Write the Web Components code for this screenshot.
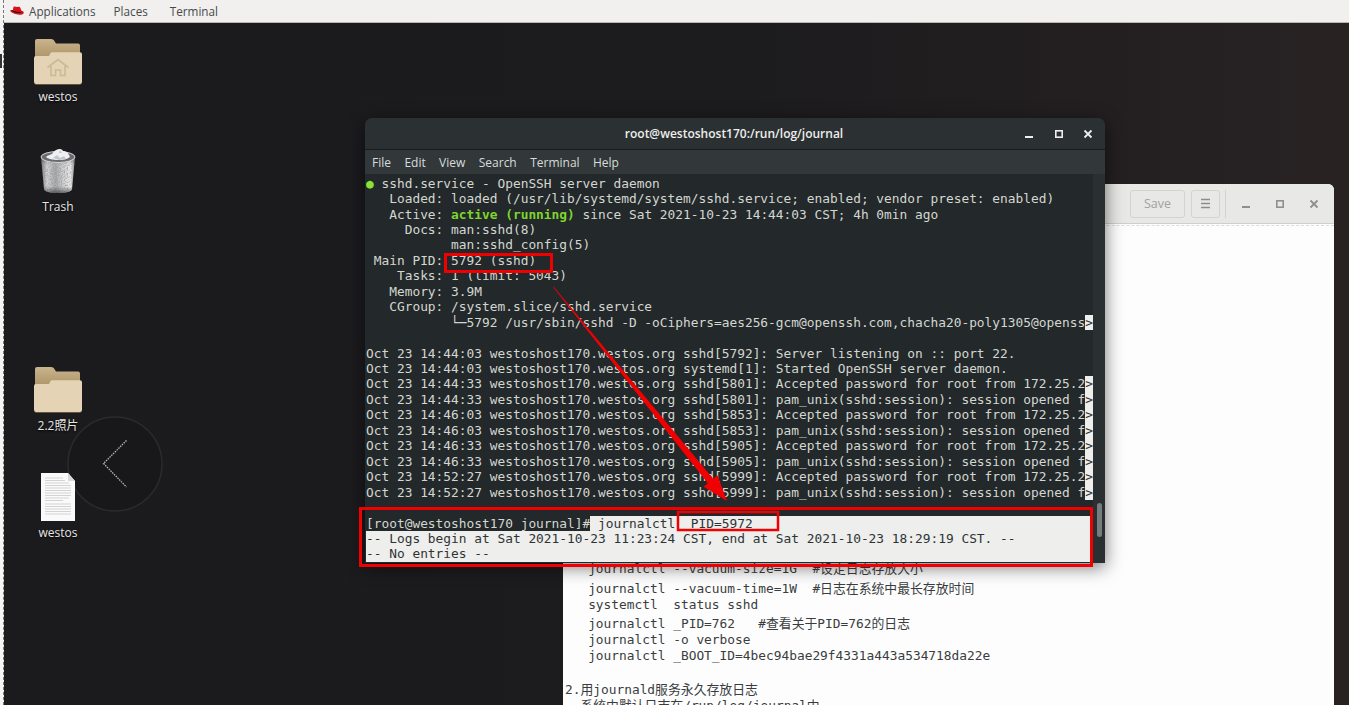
<!DOCTYPE html>
<html>
<head>
<meta charset="utf-8">
<title>desktop</title>
<style>
    html, body { margin: 0; height: 100%; overflow: hidden; background: #1b1b1d; }
</style>
</head>
<body>

<template id="desk-screen-template">
    <style>
        :host {
            display: flex;
            flex-direction: column;
            position: relative;
            width: 1349px;
            height: 705px;
            overflow: hidden;
            background: linear-gradient(90deg, #1b1b1e 0%, #1c1b1d 55%, #282223 100%);
            font-family: "Open Sans", "Noto Sans CJK SC", sans-serif;
        }
        .strip {
            position: absolute;
            left: 0;
            top: 0;
            bottom: 0;
            width: 3px;
            background: #f4f4f2;
            border-right: 1px dashed #77777a;
            z-index: 5;
        }
        .notch {
            position: absolute;
            left: 0;
            top: 54px;
            width: 2px;
            height: 14px;
            background: #333;
        }
    </style>
    <div class="strip"><div class="notch"></div></div>
    <slot></slot>
</template>

<template id="top-panel-template">
    <style>
        :host {
            display: flex;
            align-items: center;
            flex: none;
            height: 22px;
            padding-left: 10px;
            background: #f1f0ee;
            border-bottom: 1px solid #b9b8b5;
            color: #46494b;
            font-size: 11.700px;
            position: relative;
            z-index: 2;
        }
        svg { width: 14px; height: 11px; margin-right: 5px; }
        span { margin-right: 18px; }
        span + span { margin-right: 22px; }
    </style>
    <svg viewBox="0 0 14 11">
        <path fill="#d8121a" d="M4 .6C5 .2 6 .9 7.2 1c1.1 0 1.9-.5 2.7.2.7.7 1 2.2 1.4 3.2.9.4 2.4.9 2.5 2 .1 1.5-2 2.4-4.600 2.300C5.800 8.600 1.600 7 .5 5.300c-.5-.8 0-1.500.9-1.300.6.200 1.100.4 1.500.500C3.100 3 3.200 1.100 4 .6z"/>
        <path fill="#1c1112" d="M1.800 4.100c2 1.100 5.500 2.300 9.300 1.800l.3.900c-3.800.7-7.300-.5-9.900-2.100z"/>
    </svg>
    <span>Applications</span>
    <span>Places</span>
    <span>Terminal</span>
</template>

<template id="desktop-icon-template">
    <style>
        :host {
            display: flex;
            flex-direction: column;
            align-items: center;
            position: absolute;
            left: var(--x);
            top: var(--y);
            width: 90px;
            color: #e6e6e6;
            font-size: 12px;
            line-height: 16px;
            text-shadow: 0 1px 2px #000;
        }
        .pic { height: var(--pic-h, 47px); display: flex; justify-content: center; }
        .name { margin-top: var(--name-gap, 4px); }
    </style>
    <div class="pic"><slot name="pic"></slot></div>
    <div class="name"><slot></slot></div>
</template>

<template id="back-button-template">
    <style>
        :host { display: block; position: absolute; left: 66px; top: 415px; width: 98px; height: 98px; }
        svg { display: block; }
    </style>
    <svg width="98" height="98" viewBox="0 0 98 98">
        <circle cx="49" cy="49" r="47" fill="#18181a" stroke="#2b2b2d" stroke-width="1.500"/>
        <path d="M60.500 25.500L37.500 48.500 60.500 72" fill="none" stroke="#b8b8b8" stroke-width="1.300" stroke-dasharray="1.500 1"/>
    </svg>
</template>

<template id="terminal-window-template">
    <style>
        :host {
            display: flex;
            flex-direction: column;
            position: absolute;
            left: 365px;
            top: 118px;
            width: 740px;
            height: 445px;
            border-radius: 7px 7px 0 0;
            background: #23282b;
            box-shadow: 0 4px 18px rgba(0, 0, 0, .55);
            overflow: hidden;
            z-index: 2;
        }
        .title {
            flex: none;
            display: flex;
            align-items: center;
            position: relative;
            height: 31px;
            background: #2b3032;
            border-bottom: 1px solid #191c1d;
            color: #eeeeec;
            font-size: 12px;
            font-weight: 600;
        }
        .title .text { flex: 1; text-align: center; padding-right: 2px; }
        .wm { position: absolute; top: 9px; width: 14px; height: 14px; }
        .wm.min { left: 657px; }
        .wm.max { left: 687px; }
        .wm.cls { left: 716px; }
        .menu {
            flex: none;
            display: flex;
            align-items: center;
            gap: 13.400px;
            height: 24px;
            padding-left: 7px;
            background: #32383a;
            color: #d8dbdb;
            font-size: 12px;
        }
        .main { flex: 1; display: flex; min-height: 0; }
        .rows { flex: 1; padding: 1.600px 0 0 1px; min-width: 0; }
        .scroll { flex: none; width: 12px; background: #2a2f31; }
        .thumb { width: 5px; height: 34px; margin: 329px 0 0 3.500px; border-radius: 3px; background: #777c7e; }
    </style>
    <div class="title">
        <div class="text"><slot name="title"></slot></div>
        <svg class="wm min" viewBox="0 0 14 14"><rect x="3" y="9" width="8" height="2" fill="#eeeeec"/></svg>
        <svg class="wm max" viewBox="0 0 14 14"><rect x="3.800" y="3.800" width="6.400" height="6.400" fill="none" stroke="#eeeeec" stroke-width="1.600"/></svg>
        <svg class="wm cls" viewBox="0 0 14 14"><path d="M3.500 3.500l7 7M10.500 3.500l-7 7" stroke="#eeeeec" stroke-width="1.800"/></svg>
    </div>
    <div class="menu">
        <span>File</span><span>Edit</span><span>View</span><span>Search</span><span>Terminal</span><span>Help</span>
    </div>
    <div class="main">
        <div class="rows"><slot></slot></div>
        <div class="scroll"><div class="thumb"></div></div>
    </div>
</template>

<template id="term-row-template">
    <style>
        :host {
            display: flex;
            height: 15.460px;
            line-height: 15.460px;
            width: 727px;
            white-space: pre;
            font-family: "DejaVu Sans Mono", monospace;
            font-size: 12.850px;
            color: #d3d7cf;
            overflow: hidden;
        }
        :host([selected]) { background: #eeeeec; color: #2e3436; }
        ::slotted(.sel) { flex: 1; background: #eeeeec; color: #2e3436; }
        ::slotted(.more) { background: #eeeeec; color: #2e3436; font-style: normal; }
        ::slotted(.ok) { color: #7fd42e; font-weight: bold; }
        ::slotted(.dot) { color: #8ae234; }
    </style>
    <slot></slot>
</template>

<template id="editor-window-template">
    <style>
        :host {
            display: flex;
            flex-direction: column;
            position: absolute;
            left: 563px;
            top: 184px;
            width: 771px;
            height: 521px;
            border-radius: 0 6px 0 0;
            background: #fdfdfd;
            overflow: hidden;
            z-index: 1;
        }
        .head {
            flex: none;
            display: flex;
            align-items: center;
            height: 40px;
            padding-left: 567px;
            background: #e8e8e6;
            border-bottom: 1px solid #cfcfcd;
            box-sizing: border-box;
        }
        .head > * { flex: none; }
        .btn {
            box-sizing: border-box;
            display: flex;
            align-items: center;
            justify-content: center;
            height: 28px;
            border: 1px solid #d3d3d1;
            border-radius: 3px;
            color: #a2a2a0;
            font-size: 12.500px;
        }
        .save { width: 55px; margin-right: 6px; }
        .burger { width: 29px; margin-right: 5px; }
        .sep { width: 1px; height: 28px; background: #d3d3d1; margin-right: 13px; }
        .wm { width: 14px; height: 14px; margin-right: 20px; }
        .dash { flex: none; height: 0; margin-top: 1px; border-top: 1px dashed #dcdcda; }
        .doc {
            flex: 1;
            margin-left: -29px;
            padding-top: 304.200px;
            font-family: "DejaVu Sans Mono", "Noto Sans CJK SC", monospace;
            font-size: 12.850px;
            color: #3a3d3f;
        }
    </style>
    <div class="head">
        <div class="btn save">Save</div>
        <div class="btn burger">
            <svg width="11" height="11" viewBox="0 0 11 11"><path d="M1 1.500h9M1 5.500h9M1 9.500h9" stroke="#8c8c8a" stroke-width="1.500"/></svg>
        </div>
        <div class="sep"></div>
        <svg class="wm" viewBox="0 0 14 14"><rect x="3" y="9" width="8" height="2" fill="#8f8f8d"/></svg>
        <svg class="wm" viewBox="0 0 14 14"><rect x="3.800" y="3.800" width="6.400" height="6.400" fill="none" stroke="#8f8f8d" stroke-width="1.600"/></svg>
        <svg class="wm" viewBox="0 0 14 14"><path d="M3.500 3.500l7 7M10.500 3.500l-7 7" stroke="#8f8f8d" stroke-width="1.800"/></svg>
    </div>
    <div class="dash"></div>
    <div class="doc"><slot></slot></div>
</template>

<template id="doc-line-template">
    <style>
        :host {
            display: block;
            height: 15.500px;
            line-height: 15.500px;
            margin-top: var(--gap, 0);
            white-space: pre;
        }
    </style>
    <slot></slot>
</template>

<template id="red-marks-template">
    <style>
        :host { display: block; position: absolute; left: 0; top: 0; width: 1349px; height: 705px; z-index: 3; pointer-events: none; }
        svg { display: block; }
    </style>
    <svg width="1349" height="705" viewBox="0 0 1349 705">
        <g fill="none" stroke="#f00000">
            <rect x="445.500" y="254.500" width="106" height="17" stroke-width="3"/>
            <rect x="360.500" y="508.500" width="731" height="57" stroke-width="3"/>
            <rect x="678" y="512" width="100" height="18" stroke-width="2.500"/>
        </g>
        <polygon fill="#f00000" points="553,287 553.500,286.600 713.200,478.800 717.500,475.300 727,501 703.500,486.700 707.800,483.200"/>
    </svg>
</template>

<script>
    class ShadowBox extends HTMLElement {
        connectedCallback() {
            if (this.shadowRoot) return;
            const template = document.getElementById(this.constructor.templateId).content;
            this.attachShadow({ mode: "open" }).appendChild(template.cloneNode(true));
        }
    }

    const define = (name) => {
        customElements.define(name, class extends ShadowBox {
            static templateId = name + '-template';
        });
    };

    ['desk-screen', 'top-panel', 'desktop-icon', 'back-button', 'terminal-window',
     'term-row', 'editor-window', 'doc-line', 'red-marks'].forEach(define);
</script>

<desk-screen>
    <top-panel></top-panel>

    <desktop-icon style="--x:13px;--y:38px;--name-gap:4px">
        <svg slot="pic" width="48" height="47" viewBox="0 0 48 47">
            <defs><linearGradient id="tabA" x1="0" y1="0" x2="0" y2="1"><stop offset="0" stop-color="#c9b48d"/><stop offset="1" stop-color="#ad9468"/></linearGradient></defs>
            <path fill="url(#tabA)" d="M1 3a2 2 0 0 1 2-2h14c2 0 3 1 4 3l1 1.500h22a2 2 0 0 1 2 2V20H1z"/>
            <path fill="#e4d3b4" d="M0 20a2 2 0 0 1 2-2h12c1.500 0 1.600-.8 2-2 .4-1.300 1-1.800 2.500-1.800H46a2 2 0 0 1 2 2V44a2 2 0 0 1-2 2H2a2 2 0 0 1-2-2z"/>
            <path fill="#a78f63" d="M0 44.500a2 2 0 0 0 2 2h44a2 2 0 0 0 2-2V45a1 1 0 0 1-1 1H1a1 1 0 0 1-1-1z"/>
            <path fill="none" stroke="#ccb996" stroke-width="1.600" d="M13.500 29.500L24 21.500l10.500 8M17 28v9.500h4.500V32h5v5.500H31V28"/>
        </svg>
        westos
    </desktop-icon>

    <desktop-icon style="--x:13px;--y:148px;--pic-h:46px;--name-gap:5px">
        <svg slot="pic" width="36" height="46" viewBox="0 0 36 46">
            <defs>
                <linearGradient id="can" x1="0" y1="0" x2="1" y2="0">
                    <stop offset="0" stop-color="#77787a"/><stop offset=".18" stop-color="#d6d7d8"/><stop offset=".42" stop-color="#a9abac"/>
                    <stop offset=".65" stop-color="#cfd0d1"/><stop offset=".88" stop-color="#ededed"/><stop offset="1" stop-color="#808183"/>
                </linearGradient>
                <linearGradient id="canShade" x1="0" y1="0" x2="0" y2="1">
                    <stop offset="0" stop-color="#000" stop-opacity=".28"/><stop offset=".2" stop-color="#000" stop-opacity="0"/>
                    <stop offset=".82" stop-color="#000" stop-opacity="0"/><stop offset="1" stop-color="#000" stop-opacity=".45"/>
                </linearGradient>
                <filter id="grain" x="0" y="0" width="100%" height="100%">
                    <feTurbulence type="fractalNoise" baseFrequency=".7" numOctaves="2" seed="4"/>
                    <feColorMatrix values="0 0 0 0 .25  0 0 0 0 .25  0 0 0 0 .25  1.600 0 0 0 -.6"/>
                    <feComposite in2="SourceGraphic" operator="in"/>
                    <feMerge><feMergeNode in="SourceGraphic"/><feMergeNode/></feMerge>
                </filter>
            </defs>
            <path fill="url(#can)" filter="url(#grain)" d="M1 9l3 32c.3 2.800 6.500 4 14 4s13.700-1.200 14-4l3-32z"/>
            <path fill="url(#canShade)" d="M1 9l3 32c.3 2.800 6.500 4 14 4s13.700-1.200 14-4l3-32z"/>
            <ellipse cx="18" cy="9" rx="17" ry="5.500" fill="#6a6b6d" stroke="#d4d5d6" stroke-width="1"/>
            <path fill="#eef0f4" d="M6 9c2-2 4-2 6-3 2-3 5-5.500 8-5 3 .3 2 2 4 2 3 .6 5 3 6 6-3 2.500-7 3-12 3s-10-1-12-3z"/>
            <path fill="#c3c7cd" d="M13 10l4-3 3 3 4-2 2 3-7 1zM20 2l2 3-3 0z"/>
        </svg>
        Trash
    </desktop-icon>

    <desktop-icon style="--x:13px;--y:366px;--name-gap:5px">
        <svg slot="pic" width="48" height="47" viewBox="0 0 48 47">
            <defs><linearGradient id="tabB" x1="0" y1="0" x2="0" y2="1"><stop offset="0" stop-color="#c9b48d"/><stop offset="1" stop-color="#ad9468"/></linearGradient></defs>
            <path fill="url(#tabB)" d="M1 3a2 2 0 0 1 2-2h14c2 0 3 1 4 3l1 1.500h22a2 2 0 0 1 2 2V20H1z"/>
            <path fill="#e4d3b4" d="M0 20a2 2 0 0 1 2-2h12c1.500 0 1.600-.8 2-2 .4-1.300 1-1.800 2.500-1.800H46a2 2 0 0 1 2 2V44a2 2 0 0 1-2 2H2a2 2 0 0 1-2-2z"/>
            <path fill="#a78f63" d="M0 44.500a2 2 0 0 0 2 2h44a2 2 0 0 0 2-2V45a1 1 0 0 1-1 1H1a1 1 0 0 1-1-1z"/>
        </svg>
        2.2照片
    </desktop-icon>

    <back-button></back-button>

    <desktop-icon style="--x:13px;--y:473px;--pic-h:48px;--name-gap:4px">
        <svg slot="pic" width="34" height="48" viewBox="0 0 34 48">
            <path fill="#fafafa" d="M0 0h27l7 8v40H0z"/>
            <path fill="#d8d8d8" d="M27 0l7 8h-7z"/>
            <path stroke="#c2c2c2" stroke-width=".7" d="M4 5h18M4 7.500h20M4 10h24M4 12.500h26M4 15h26M4 17.500h26M4 20h26M4 22.500h26M4 25h24M4 27.500h18M4 31h26M4 33.500h26M4 36h26M4 38.500h26M4 41h26"/>
        </svg>
        westos
    </desktop-icon>

    <editor-window>
        <doc-line>   journalctl --vacuum-size=1G  #设定日志存放大小</doc-line>
        <doc-line style="--gap:4.500px">   journalctl --vacuum-time=1W  #日志在系统中最长存放时间</doc-line>
        <doc-line style="--gap:.5px">   systemctl  status sshd</doc-line>
        <doc-line style="--gap:3.500px">   journalctl _PID=762   #查看关于PID=762的日志</doc-line>
        <doc-line style="--gap:.5px">   journalctl -o verbose</doc-line>
        <doc-line style="--gap:.5px">   journalctl _BOOT_ID=4bec94bae29f4331a443a534718da22e</doc-line>
        <doc-line style="--gap:18.500px">2.用journald服务永久存放日志</doc-line>
        <doc-line style="--gap:0">  系统中默认日志在/run/log/journal中</doc-line>
    </editor-window>

    <terminal-window>
        <span slot="title">root@westoshost170:/run/log/journal</span>
        <term-row><span class="dot">●</span> sshd.service - OpenSSH server daemon</term-row>
        <term-row>   Loaded: loaded (/usr/lib/systemd/system/sshd.service; enabled; vendor preset: enabled)</term-row>
        <term-row>   Active: <span class="ok">active (running)</span> since Sat 2021-10-23 14:44:03 CST; 4h 0min ago</term-row>
        <term-row>     Docs: man:sshd(8)</term-row>
        <term-row>           man:sshd_config(5)</term-row>
        <term-row> Main PID: 5792 (sshd)</term-row>
        <term-row>    Tasks: 1 (limit: 5043)</term-row>
        <term-row>   Memory: 3.9M</term-row>
        <term-row>   CGroup: /system.slice/sshd.service</term-row>
        <term-row>           └─5792 /usr/sbin/sshd -D -oCiphers=aes256-gcm@openssh.com,chacha20-poly1305@openss<i class="more">&gt;</i></term-row>
        <term-row></term-row>
        <term-row>Oct 23 14:44:03 westoshost170.westos.org sshd[5792]: Server listening on :: port 22.</term-row>
        <term-row>Oct 23 14:44:03 westoshost170.westos.org systemd[1]: Started OpenSSH server daemon.</term-row>
        <term-row>Oct 23 14:44:33 westoshost170.westos.org sshd[5801]: Accepted password for root from 172.25.2<i class="more">&gt;</i></term-row>
        <term-row>Oct 23 14:44:33 westoshost170.westos.org sshd[5801]: pam_unix(sshd:session): session opened f<i class="more">&gt;</i></term-row>
        <term-row>Oct 23 14:46:03 westoshost170.westos.org sshd[5853]: Accepted password for root from 172.25.2<i class="more">&gt;</i></term-row>
        <term-row>Oct 23 14:46:03 westoshost170.westos.org sshd[5853]: pam_unix(sshd:session): session opened f<i class="more">&gt;</i></term-row>
        <term-row>Oct 23 14:46:33 westoshost170.westos.org sshd[5905]: Accepted password for root from 172.25.2<i class="more">&gt;</i></term-row>
        <term-row>Oct 23 14:46:33 westoshost170.westos.org sshd[5905]: pam_unix(sshd:session): session opened f<i class="more">&gt;</i></term-row>
        <term-row>Oct 23 14:52:27 westoshost170.westos.org sshd[5999]: Accepted password for root from 172.25.2<i class="more">&gt;</i></term-row>
        <term-row>Oct 23 14:52:27 westoshost170.westos.org sshd[5999]: pam_unix(sshd:session): session opened f<i class="more">&gt;</i></term-row>
        <term-row></term-row>
        <term-row>[root@westoshost170 journal]#<span class="sel"> journalctl _PID=5972</span></term-row>
        <term-row selected>-- Logs begin at Sat 2021-10-23 11:23:24 CST, end at Sat 2021-10-23 18:29:19 CST. --</term-row>
        <term-row selected>-- No entries --</term-row>
    </terminal-window>

    <red-marks></red-marks>
</desk-screen>

</body>
</html>
